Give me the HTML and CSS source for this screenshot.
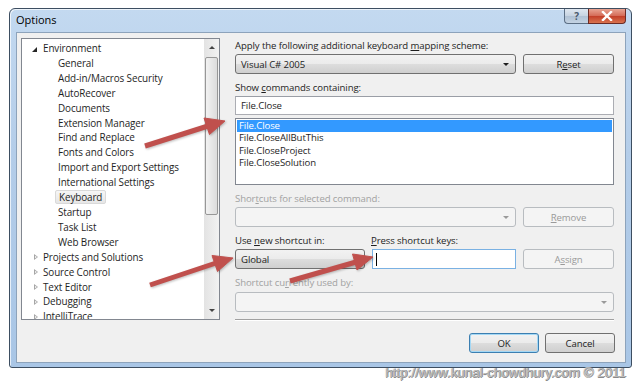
FILE: index.html
```html
<!DOCTYPE html>
<html lang="en">
  <head>
    <meta charset="UTF-8" />
    <title>Options</title>
    <link rel="stylesheet" href="styles.css">
  </head>
  <body>
    <div class="window">
      <div class="titlebar">
        <span class="title">Options</span>
        <div class="caption-btns">
          <span class="cap cap-help">?</span>
          <span class="cap cap-close">
            <svg width="12" height="10" viewBox="0 0 12 10"><path d="M2 1 L10 9 M10 1 L2 9" stroke="#fff" stroke-width="2.4" stroke-linecap="square"/></svg>
          </span>
        </div>
      </div>

      <div class="client">
        <!-- Category tree -->
        <div class="tree">
          <ul class="tree-list">
            <li class="node"><span class="exp exp-open"></span>Environment</li>
            <li class="leaf">General</li>
            <li class="leaf">Add-in/Macros Security</li>
            <li class="leaf">AutoRecover</li>
            <li class="leaf">Documents</li>
            <li class="leaf">Extension Manager</li>
            <li class="leaf">Find and Replace</li>
            <li class="leaf">Fonts and Colors</li>
            <li class="leaf">Import and Export Settings</li>
            <li class="leaf">International Settings</li>
            <li class="leaf"><span class="selected">Keyboard</span></li>
            <li class="leaf">Startup</li>
            <li class="leaf">Task List</li>
            <li class="leaf">Web Browser</li>
            <li class="node"><span class="exp"></span>Projects and Solutions</li>
            <li class="node"><span class="exp"></span>Source Control</li>
            <li class="node"><span class="exp"></span>Text Editor</li>
            <li class="node"><span class="exp"></span>Debugging</li>
            <li class="node"><span class="exp"></span>IntelliTrace</li>
          </ul>
          <div class="vscroll">
            <div class="sb-arrow sb-up"></div>
            <div class="sb-track"><div class="sb-thumb"></div></div>
            <div class="sb-arrow sb-down"></div>
          </div>
        </div>

        <!-- Keyboard page -->
        <div class="pane">
          <div class="label">Apply the following additional keyboard <u>m</u>apping scheme:</div>
          <div class="row">
            <div class="combo combo-btn grow">Visual C# 2005<span class="caret"></span></div>
            <div class="btn">R<u>e</u>set</div>
          </div>

          <div class="label gap">Show <u>c</u>ommands containing:</div>
          <div class="textbox">File.Close</div>
          <ul class="listbox">
            <li class="active">File.Close</li>
            <li>File.CloseAllButThis</li>
            <li>File.CloseProject</li>
            <li>File.CloseSolution</li>
          </ul>

          <div class="label gap disabled">Shor<u>t</u>cuts for selected command:</div>
          <div class="row">
            <div class="combo combo-off grow"><span class="caret"></span></div>
            <div class="btn btn-off"><u>R</u>emove</div>
          </div>

          <div class="row gap labels">
            <div class="label col-scope">Use <u>n</u>ew shortcut in:</div>
            <div class="label"><u>P</u>ress shortcut keys:</div>
          </div>
          <div class="row">
            <div class="combo combo-btn col-scope">Global</div>
            <div class="textbox keys grow"><span class="cursor"></span></div>
            <div class="btn btn-off">A<u>s</u>sign</div>
          </div>

          <div class="label gap disabled">Shortcut cu<u>r</u>rently used by:</div>
          <div class="combo combo-off wide"><span class="caret"></span></div>

          <div class="separator"></div>

          <div class="footer">
            <div class="btn btn-default">OK</div>
            <div class="btn">Cancel</div>
          </div>
        </div>
      </div>
    </div>

    <!-- callout arrows drawn over the dialog -->
    <svg class="arrows" width="640" height="381" viewBox="0 0 640 381">
      <g fill="#c0504d" stroke="#c0504d">
        <line x1="145" y1="146" x2="208" y2="126" stroke-width="5"/>
        <polygon points="225,121 209.5,134.5 204,118" stroke-width="1" stroke-linejoin="round"/>
        <line x1="150" y1="285" x2="216" y2="263" stroke-width="5"/>
        <polygon points="233,258 217.5,271.5 212,255.5" stroke-width="1" stroke-linejoin="round"/>
        <line x1="290" y1="281" x2="356" y2="262" stroke-width="5"/>
        <polygon points="373,257 357,270 352.5,254" stroke-width="1" stroke-linejoin="round"/>
      </g>
    </svg>

    <div class="watermark">http://www.kunal-chowdhury.com © 2011</div>
  </body>
</html>
```

FILE: styles.css
```css
/* Basic page */
body {
  margin: 0;
  width: 640px;
  height: 381px;
  background-color: #fff;
  font-family: "Open Sans", "Noto Sans", sans-serif;
  font-size: 9.6px;
  letter-spacing: -0.1px;
  color: #1e1e1e;
  position: relative;
  overflow: hidden;
}

ul {
  list-style: none;
  margin: 0;
  padding: 0;
}

u {
  text-decoration-thickness: 1px;
  text-underline-offset: 1px;
}

/* Window frame */
.window {
  margin: 8px 0 0 9px;
  border: 1px solid #3d4e61;
  border-radius: 6px 6px 3px 3px;
  background: linear-gradient(to bottom, #c3d9f0 0%, #b4cde9 40%, #a9c6e6 100%);
  padding: 0 5px 4px 6px;
  box-sizing: border-box;
  width: 623px;
  height: 360px;
  display: flex;
  flex-direction: column;
  box-shadow: inset 1px 1px 0 rgba(255, 255, 255, 0.7);
}

.titlebar {
  height: 23px;
  display: flex;
  justify-content: space-between;
  align-items: flex-start;
}

.title {
  font-size: 11px;
  letter-spacing: 0;
  margin-top: 3px;
  color: #000;
}

.caption-btns {
  display: flex;
}

.cap {
  height: 15px;
  border: 1px solid #5c6f85;
  border-top: none;
  display: flex;
  align-items: center;
  justify-content: center;
  box-sizing: border-box;
}

.cap-help {
  width: 24px;
  border-radius: 0 0 0 4px;
  border-right: none;
  background: linear-gradient(to bottom, #dfe7f0 0%, #c6d3e1 50%, #b0c1d4 51%, #c4d3e3 100%);
  color: #4a5a6c;
  font-size: 10px;
  font-weight: bold;
}

.cap-close {
  width: 38px;
  border-radius: 0 0 4px 0;
  border-color: #6b2b25;
  background: linear-gradient(to bottom, #e8a493 0%, #d46a56 50%, #c23e28 51%, #d9734f 100%);
}

/* Client area */
.client {
  flex: 1;
  background-color: #f0f0f0;
  border: 1px solid #8da3bb;
  display: flex;
  padding: 5px 0 0 4px;
  box-sizing: border-box;
}

/* Tree view */
.tree {
  width: 199px;
  height: 282px;
  border: 1px solid #828790;
  background-color: #fff;
  box-sizing: border-box;
  display: flex;
  overflow: hidden;
}

.tree-list {
  flex: 1;
  padding-top: 2px;
  line-height: 14.9px;
  white-space: nowrap;
  font-size: 9.9px;
}

.node {
  padding-left: 9px;
  display: flex;
  align-items: center;
}

.leaf {
  padding-left: 36px;
}

.exp {
  width: 0;
  height: 0;
  margin: 0 5px 0 3px;
  border-top: 3px solid transparent;
  border-bottom: 3px solid transparent;
  border-left: 4px solid #a6a6a6;
  position: relative;
}

.exp::after {
  content: "";
  position: absolute;
  left: -3px;
  top: -1px;
  border-top: 1px solid transparent;
  border-bottom: 1px solid transparent;
  border-left: 2px solid #fff;
}

.exp-open {
  border: none;
  border-right: 5px solid #262626;
  border-top: 5px solid transparent;
  margin: 0 6px 0 1px;
  transform: translateY(1px);
}

.exp-open::after {
  display: none;
}

.selected {
  display: inline-block;
  padding: 0 3px;
  margin-left: -3px;
  background: linear-gradient(to bottom, #f6f6f6, #e6e6e6);
  border: 1px solid #d9d9d9;
  border-radius: 2px;
  line-height: 12px;
}

.vscroll {
  width: 15px;
  background: linear-gradient(to right, #e3e3e3, #f2f2f2);
  display: flex;
  flex-direction: column;
}

.sb-arrow {
  height: 17px;
  display: flex;
  align-items: center;
  justify-content: center;
}

.sb-arrow::before {
  content: "";
  border-left: 3px solid transparent;
  border-right: 3px solid transparent;
}

.sb-up::before {
  border-bottom: 3px solid #444;
}

.sb-down::before {
  border-top: 3px solid #444;
}

.sb-track {
  flex: 1;
  padding: 1px 1px 0 1px;
}

.sb-thumb {
  height: 156px;
  border: 1px solid #979797;
  border-radius: 2px;
  background: linear-gradient(to right, #f2f2f2, #dcdcdc);
}

/* Right pane */
.pane {
  width: 379px;
  margin-left: 15px;
  display: flex;
  flex-direction: column;
}

.label {
  line-height: 14px;
  margin-top: 1px;
  white-space: nowrap;
}

.label.gap,
.row.gap {
  margin-top: 7px;
}

.row.labels .label {
  margin-top: 0;
}

.disabled {
  color: #a2a2a2;
}

.row {
  display: flex;
  gap: 7px;
  margin-top: 1px;
}

.grow {
  flex: 1;
}

.col-scope {
  width: 130px;
}

.row.labels {
  gap: 6px;
}

.btn {
  width: 91px;
  height: 20px;
  box-sizing: border-box;
  border: 1px solid #707070;
  border-radius: 3px;
  background: linear-gradient(to bottom, #f2f2f2 0%, #ebebeb 50%, #dddddd 51%, #cfcfcf 100%);
  display: flex;
  align-items: center;
  justify-content: center;
}

.btn-off {
  border-color: #b8bcc0;
  background: #f4f4f4;
  color: #9a9a9a;
}

.btn-default {
  border-color: #3c7fb1;
  box-shadow: inset 0 0 0 1px #a4d8f5;
}

.combo {
  height: 20px;
  box-sizing: border-box;
  border-radius: 3px;
  display: flex;
  align-items: center;
  padding-left: 5px;
  position: relative;
}

.combo-btn {
  border: 1px solid #707070;
  background: linear-gradient(to bottom, #f2f2f2 0%, #ebebeb 50%, #dddddd 51%, #cfcfcf 100%);
}

.combo-off {
  border: 1px solid #b8bcc0;
  background: #f4f4f4;
}

.combo.wide {
  margin-top: 2px;
}

.caret {
  margin-left: auto;
  margin-right: 6px;
  border-left: 3px solid transparent;
  border-right: 3px solid transparent;
  border-top: 3px solid #1e1e1e;
}

.combo-off .caret {
  border-top-color: #9a9a9a;
}

.textbox {
  height: 19px;
  box-sizing: border-box;
  border: 1px solid #abadb3;
  border-top-color: #9a9ea6;
  background-color: #fff;
  padding-left: 5px;
  display: flex;
  align-items: center;
  margin-top: 1px;
}

.textbox.keys {
  height: 20px;
  margin-top: 0;
  border-color: #7ab1e3;
  padding-left: 3px;
}

.cursor {
  width: 1px;
  height: 13px;
  background-color: #000;
}

.listbox {
  height: 67px;
  margin-top: 3px;
  border: 1px solid #828790;
  background-color: #fff;
  box-sizing: border-box;
  padding: 1px;
  line-height: 12.3px;
}

.listbox li {
  padding-left: 2px;
}

.listbox .active {
  background-color: #3399ff;
  color: #fff;
}

.separator {
  margin-top: 7px;
  height: 1px;
  background-color: #a0a0a0;
  border-bottom: 1px solid #fff;
}

.footer {
  display: flex;
  justify-content: flex-end;
  gap: 6px;
  margin-top: 12px;
  margin-right: -1px;
}

.footer .btn {
  width: 70px;
}

/* Overlays */
.arrows {
  position: absolute;
  left: 0;
  top: 0;
  filter: drop-shadow(1px 1px 1px rgba(0, 0, 0, 0.25));
}

.watermark {
  position: absolute;
  right: 14px;
  top: 365px;
  font-family: "Liberation Sans", Arial, sans-serif;
  font-size: 13.4px;
  letter-spacing: 0;
  color: #bdbdbd;
  text-shadow: 1px 0 0 #8a8a8a, 0 1px 0 #8a8a8a, -1px 0 0 #f4f4f4;
}
```
